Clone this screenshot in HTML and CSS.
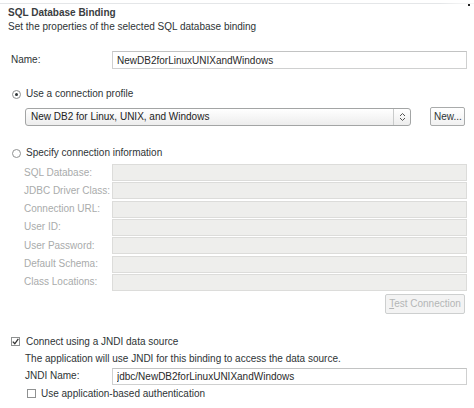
FILE: index.html
```html
<!DOCTYPE html>
<html lang="en">
<head>
    <meta charset="UTF-8">
    <title>SQL Database Binding</title>
    <link rel="stylesheet" href="styles.css">
</head>
<body>
    <div class="top-rule"><span class="corner"></span></div>
    <div class="header">
        <div class="title">SQL Database Binding</div>
        <div class="line">Set the properties of the selected SQL database binding</div>
    </div>

    <div class="form">
        <div class="field name-row">
            <label class="label wide">Name:</label>
            <input class="text-input" type="text" value="NewDB2forLinuxUNIXandWindows">
        </div>

        <div class="option first-option">
            <span class="radio checked"></span>
            <span>Use a connection profile</span>
        </div>
        <div class="profile-row">
            <div class="combo">
                <span class="combo-text">New DB2 for Linux, UNIX, and Windows</span>
                <span class="combo-arrow">
                    <svg width="7" height="10" viewBox="0 0 7 10">
                        <path d="M1 4 L3.5 1.5 L6 4 M1 6 L3.5 8.5 L6 6" fill="none" stroke="#555" stroke-width="1"/>
                    </svg>
                </span>
            </div>
            <button class="button new-button" type="button">New...</button>
        </div>

        <div class="option second-option">
            <span class="radio"></span>
            <span>Specify connection information</span>
        </div>
        <div class="details">
            <label class="label muted">SQL Database:</label><input class="text-input" type="text" disabled>
            <label class="label muted">JDBC Driver Class:</label><input class="text-input" type="text" disabled>
            <label class="label muted">Connection URL:</label><input class="text-input" type="text" disabled>
            <label class="label muted">User ID:</label><input class="text-input" type="text" disabled>
            <label class="label muted">User Password:</label><input class="text-input" type="text" disabled>
            <label class="label muted">Default Schema:</label><input class="text-input" type="text" disabled>
            <label class="label muted">Class Locations:</label><input class="text-input" type="text" disabled>
        </div>
        <div class="test-row">
            <button class="button test-button" type="button" disabled><u>T</u>est Connection</button>
        </div>

        <div class="option jndi-option">
            <span class="check checked">
                <svg width="7" height="7" viewBox="0 0 7 7">
                    <path d="M0.8 3.6 L2.8 5.8 L6.3 0.8" fill="none" stroke="#333" stroke-width="1.3"/>
                </svg>
            </span>
            <span>Connect using a JNDI data source</span>
        </div>
        <div class="line indent jndi-note">The application will use JNDI for this binding to access the data source.</div>
        <div class="field jndi-row">
            <label class="label">JNDI Name:</label>
            <input class="text-input" type="text" value="jdbc/NewDB2forLinuxUNIXandWindows">
        </div>
        <div class="option auth-option">
            <span class="check"></span>
            <span>Use application-based authentication</span>
        </div>
    </div>
</body>
</html>
```

FILE: styles.css
```css
body {
    margin: 0;
    font-family: "Liberation Sans", Arial, sans-serif;
    font-size: 10px;
    color: #2e3436;
    background: #ffffff;
    width: 474px;
    height: 408px;
    overflow: hidden;
}
.top-rule {
    margin-top: 3px;
    height: 1px;
    background: linear-gradient(to right, #e4e6e8 0, #e4e6e8 440px, #f6f6f6 465px);
    position: relative;
}
.corner {
    position: absolute;
    right: 4px;
    top: 1px;
    width: 2px;
    height: 2px;
    background: #222222;
}
.header {
    margin-top: 2px;
    padding-left: 8px;
    line-height: 14px;
}
.title {
    font-weight: bold;
    color: #3a3d3f;
}
.line {
    line-height: 14px;
    white-space: nowrap;
}
.form {
    padding: 0 7px 0 11px;
}
.field {
    display: flex;
    align-items: center;
}
.label {
    flex: none;
    width: 88px;
    line-height: 14px;
    white-space: nowrap;
}
.label.wide {
    width: 101px;
}
.label.muted {
    color: #a9abab;
}
.text-input {
    box-sizing: border-box;
    flex: 1;
    min-width: 0;
    height: 17px;
    margin: 0;
    padding: 0 4px;
    border: 1px solid #cfd0d0;
    border-top-color: #c2c3c3;
    background: #ffffff;
    font-family: inherit;
    font-size: 10px;
    color: #2a2a2a;
    outline: none;
}
.text-input:disabled {
    background: #eeeeec;
    border-color: #dcdcda;
}
.name-row {
    margin-top: 17px;
}
.name-row .text-input {
    height: 18px;
}
.option {
    display: flex;
    align-items: center;
    height: 14px;
    line-height: 14px;
    white-space: nowrap;
}
.first-option {
    margin-top: 18px;
}
.second-option {
    margin-top: 20px;
}
.radio {
    box-sizing: border-box;
    width: 9px;
    height: 9px;
    margin: 0 5px 0 1px;
    border: 1px solid #8f9191;
    border-radius: 50%;
    background: #ffffff;
    display: flex;
    align-items: center;
    justify-content: center;
}
.radio.checked::after {
    content: "";
    width: 3px;
    height: 3px;
    border-radius: 50%;
    background: #2e3436;
}
.check {
    box-sizing: border-box;
    width: 9px;
    height: 9px;
    margin-right: 6px;
    border: 1px solid #8f9191;
    background: #ffffff;
    display: flex;
    align-items: center;
    justify-content: center;
}
.profile-row {
    display: flex;
    align-items: center;
    margin-top: 6px;
    margin-left: 14px;
}
.combo {
    box-sizing: border-box;
    width: 386px;
    height: 18px;
    display: flex;
    align-items: center;
    border: 1px solid #a3a5a5;
    border-radius: 3px;
    background: linear-gradient(#ffffff, #ededed);
}
.combo-text {
    flex: 1;
    padding-left: 5px;
    color: #222222;
}
.combo-arrow {
    width: 16px;
    height: 16px;
    border-left: 1px solid #c9cbcb;
    display: flex;
    align-items: center;
    justify-content: center;
}
.button {
    box-sizing: border-box;
    height: 19px;
    margin: 0;
    padding: 0 3px;
    border: 1px solid #a9abab;
    border-radius: 2px;
    background: linear-gradient(#ffffff, #f1f1f1);
    font-family: inherit;
    font-size: 10px;
    color: #2e3436;
}
.new-button {
    width: 35px;
    margin-left: 19px;
}
.details {
    display: grid;
    grid-template-columns: 88px 1fr;
    grid-auto-rows: 17px;
    row-gap: 1.33px;
    align-items: center;
    margin-top: 4px;
    margin-left: 13px;
}
.details .text-input {
    height: 17px;
}
.test-row {
    display: flex;
    justify-content: flex-end;
    margin-top: 3px;
    padding-right: 2px;
}
.test-button {
    width: 80px;
    height: 20px;
    color: #b4b6b6;
    border-color: #cdcfcf;
    background: #f3f3f3;
}
.jndi-option {
    margin-top: 21px;
}
.indent {
    margin-left: 14px;
}
.jndi-note {
    margin-top: 3px;
}
.jndi-row {
    margin-top: 2px;
    margin-left: 14px;
}
.jndi-row .label {
    width: 87px;
}
.auth-option {
    margin-top: 2px;
    margin-left: 16px;
}
.auth-option .check {
    margin-right: 5px;
}
```
